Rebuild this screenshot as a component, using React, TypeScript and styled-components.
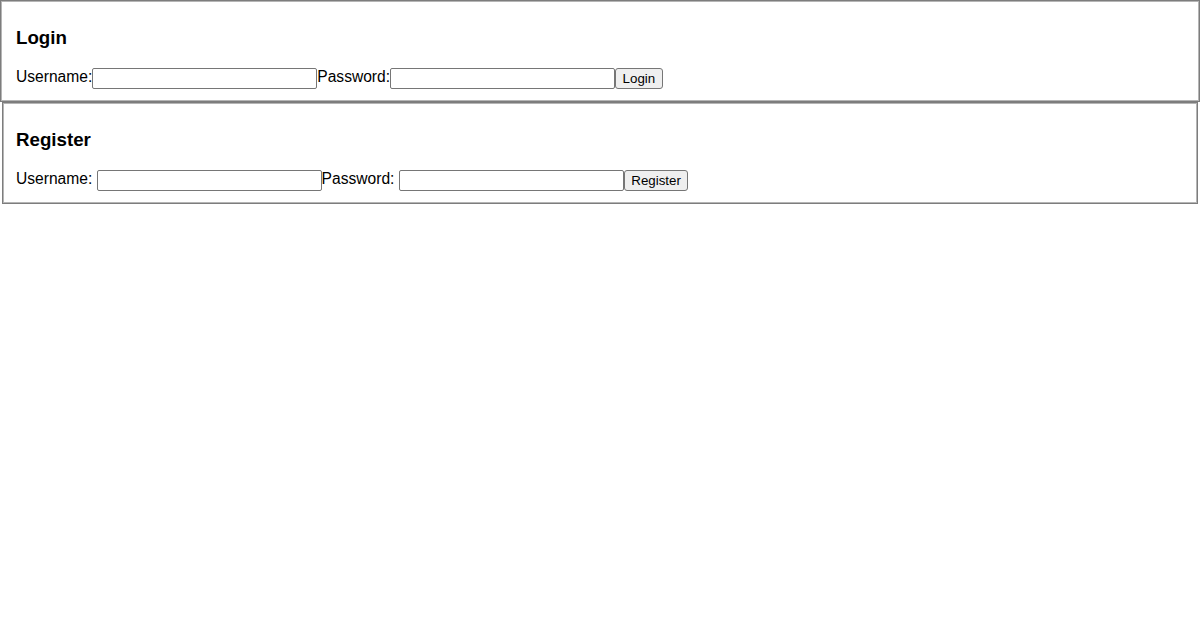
import React from 'react';
import styled, { createGlobalStyle } from 'styled-components';

const GlobalStyle = createGlobalStyle`
  body {
    margin: 0;
    font-family: 'Liberation Sans', Arial, sans-serif;
    font-size: 15.6px;
    color: #000;
    background: #fff;
  }
`;

const Panel = styled.section<{ inset?: boolean }>`
  border: 1px solid #7d7d7d;
  box-shadow: inset 0 0 0 1px #b5b5b5;
  padding: 7px ${(props) => (props.inset ? '13px' : '15px')} 12px;
  margin: ${(props) => (props.inset ? '0 2px' : '0')};
`;

const Heading = styled.h3`
  font-size: 18.72px;
  font-weight: bold;
  margin: 18.72px 0 17.72px;
`;

const Row = styled.div`
  line-height: 21px;
`;

const Field = styled.input`
  width: 225px;
  height: 21px;
  box-sizing: border-box;
  font-family: 'Liberation Sans', Arial, sans-serif;
  font-size: 13.33px;
  padding: 1px 2px;
  border: 1px solid #767676;
  border-radius: 2px;
  background: #fff;
  vertical-align: middle;
`;

const Submit = styled.button`
  height: 21px;
  box-sizing: border-box;
  font-family: 'Liberation Sans', Arial, sans-serif;
  font-size: 13.33px;
  padding: 1px 6.5px;
  border: 1px solid #767676;
  border-radius: 3px;
  background: #efefef;
  color: #000;
  vertical-align: middle;
`;

const Form = ({ title, spaced }: { title: string; spaced?: boolean }) => (
  <Panel inset={spaced}>
    <Heading>{title}</Heading>
    <Row>
      {spaced ? 'Username: ' : 'Username:'}
      <Field type="text" />
      {spaced ? 'Password: ' : 'Password:'}
      <Field type="password" />
      <Submit type="button">{title}</Submit>
    </Row>
  </Panel>
);

const App = () => (
  <>
    <GlobalStyle />
    <Form title="Login" />
    <Form title="Register" spaced />
  </>
);

export default App;
